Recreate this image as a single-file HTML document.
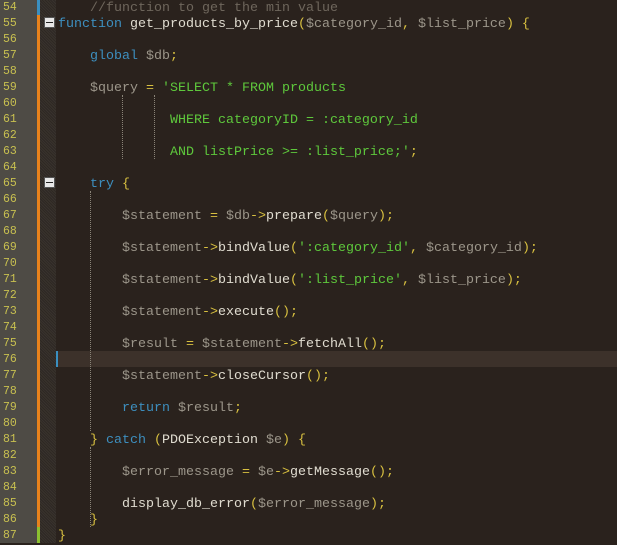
<!DOCTYPE html><html><head><style>
body{margin:0;width:617px;height:543px;overflow:hidden;background:#2a221d;font-family:"Liberation Mono",monospace;font-size:13.33px;position:relative}
.g{position:absolute;left:0;top:0;width:37px;height:543px;background:#4e4b45}
.bar{position:absolute;left:37px;width:3px}
.h{position:absolute;left:40px;top:0;width:16px;height:543px;background:repeating-linear-gradient(45deg,#38322d 0 1px,#2e2823 1px 2px)}
.n{position:absolute;left:3px;width:30px;color:#c8c050;height:16px;line-height:16px;font-size:11.5px;padding-top:1px}
.l{position:absolute;left:58px;height:16px;line-height:16px;white-space:pre;color:#e0dcd0;padding-top:2px}
.k{color:#3d8fbf}.s{color:#5ec83c}.v{color:#9c968a}.p{color:#d8c040}.c{color:#6e665c}
.gd{position:absolute;width:0;border-left:1px dotted #8a8478}
.fold{position:absolute;left:44px;width:9px;height:9px;background:#e8e8e8;border:1px solid #555}
.fold:after{content:"";position:absolute;left:1px;top:4px;width:7px;height:1px;background:#222}
</style></head><body>
<div class="g"></div>
<div class="bar" style="top:0;height:15px;background:#3a8fc0"></div>
<div class="bar" style="top:15px;height:512px;background:#e8821c"></div>
<div class="bar" style="top:527px;height:16px;background:#8cc030"></div>
<div class="h"></div>
<div style="position:absolute;left:56px;top:351px;width:561px;height:16px;background:#3c312a"></div>
<div style="position:absolute;left:56px;top:351px;width:2px;height:16px;background:#3a8fc0"></div>
<div class="fold" style="top:17px"></div>
<div class="fold" style="top:177px"></div>
<div class="gd" style="left:122px;top:95px;height:64px"></div>
<div class="gd" style="left:154px;top:95px;height:64px"></div>
<div class="gd" style="left:90px;top:191px;height:240px"></div>
<div class="gd" style="left:90px;top:447px;height:80px"></div>
<div class="n" style="top:-1px">54</div><div class="n" style="top:15px">55</div><div class="n" style="top:31px">56</div><div class="n" style="top:47px">57</div><div class="n" style="top:63px">58</div><div class="n" style="top:79px">59</div><div class="n" style="top:95px">60</div><div class="n" style="top:111px">61</div><div class="n" style="top:127px">62</div><div class="n" style="top:143px">63</div><div class="n" style="top:159px">64</div><div class="n" style="top:175px">65</div><div class="n" style="top:191px">66</div><div class="n" style="top:207px">67</div><div class="n" style="top:223px">68</div><div class="n" style="top:239px">69</div><div class="n" style="top:255px">70</div><div class="n" style="top:271px">71</div><div class="n" style="top:287px">72</div><div class="n" style="top:303px">73</div><div class="n" style="top:319px">74</div><div class="n" style="top:335px">75</div><div class="n" style="top:351px">76</div><div class="n" style="top:367px">77</div><div class="n" style="top:383px">78</div><div class="n" style="top:399px">79</div><div class="n" style="top:415px">80</div><div class="n" style="top:431px">81</div><div class="n" style="top:447px">82</div><div class="n" style="top:463px">83</div><div class="n" style="top:479px">84</div><div class="n" style="top:495px">85</div><div class="n" style="top:511px">86</div><div class="n" style="top:527px">87</div>
<div class="l" style="top:-1px"><span class="c">    //function to get the min value</span></div>
<div class="l" style="top:15px"><span class="k">function</span> get_products_by_price<span class="p">(</span><span class="v">$category_id</span><span class="p">,</span> <span class="v">$list_price</span><span class="p">) {</span></div>
<div class="l" style="top:47px">    <span class="k">global</span> <span class="v">$db</span><span class="p">;</span></div>
<div class="l" style="top:79px">    <span class="v">$query</span> <span class="p">=</span> <span class="s">'SELECT * FROM products</span></div>
<div class="l" style="top:111px"><span class="s">              WHERE categoryID = :category_id</span></div>
<div class="l" style="top:143px"><span class="s">              AND listPrice &gt;= :list_price;'</span><span class="p">;</span></div>
<div class="l" style="top:175px">    <span class="k">try</span> <span class="p">{</span></div>
<div class="l" style="top:207px">        <span class="v">$statement</span> <span class="p">=</span> <span class="v">$db</span><span class="p">-&gt;</span>prepare<span class="p">(</span><span class="v">$query</span><span class="p">);</span></div>
<div class="l" style="top:239px">        <span class="v">$statement</span><span class="p">-&gt;</span>bindValue<span class="p">(</span><span class="s">':category_id'</span><span class="p">,</span> <span class="v">$category_id</span><span class="p">);</span></div>
<div class="l" style="top:271px">        <span class="v">$statement</span><span class="p">-&gt;</span>bindValue<span class="p">(</span><span class="s">':list_price'</span><span class="p">,</span> <span class="v">$list_price</span><span class="p">);</span></div>
<div class="l" style="top:303px">        <span class="v">$statement</span><span class="p">-&gt;</span>execute<span class="p">();</span></div>
<div class="l" style="top:335px">        <span class="v">$result</span> <span class="p">=</span> <span class="v">$statement</span><span class="p">-&gt;</span>fetchAll<span class="p">();</span></div>
<div class="l" style="top:367px">        <span class="v">$statement</span><span class="p">-&gt;</span>closeCursor<span class="p">();</span></div>
<div class="l" style="top:399px">        <span class="k">return</span> <span class="v">$result</span><span class="p">;</span></div>
<div class="l" style="top:431px">    <span class="p">}</span> <span class="k">catch</span> <span class="p">(</span>PDOException <span class="v">$e</span><span class="p">) {</span></div>
<div class="l" style="top:463px">        <span class="v">$error_message</span> <span class="p">=</span> <span class="v">$e</span><span class="p">-&gt;</span>getMessage<span class="p">();</span></div>
<div class="l" style="top:495px">        display_db_error<span class="p">(</span><span class="v">$error_message</span><span class="p">);</span></div>
<div class="l" style="top:511px">    <span class="p">}</span></div>
<div class="l" style="top:527px"><span class="p">}</span></div>
</body></html>
